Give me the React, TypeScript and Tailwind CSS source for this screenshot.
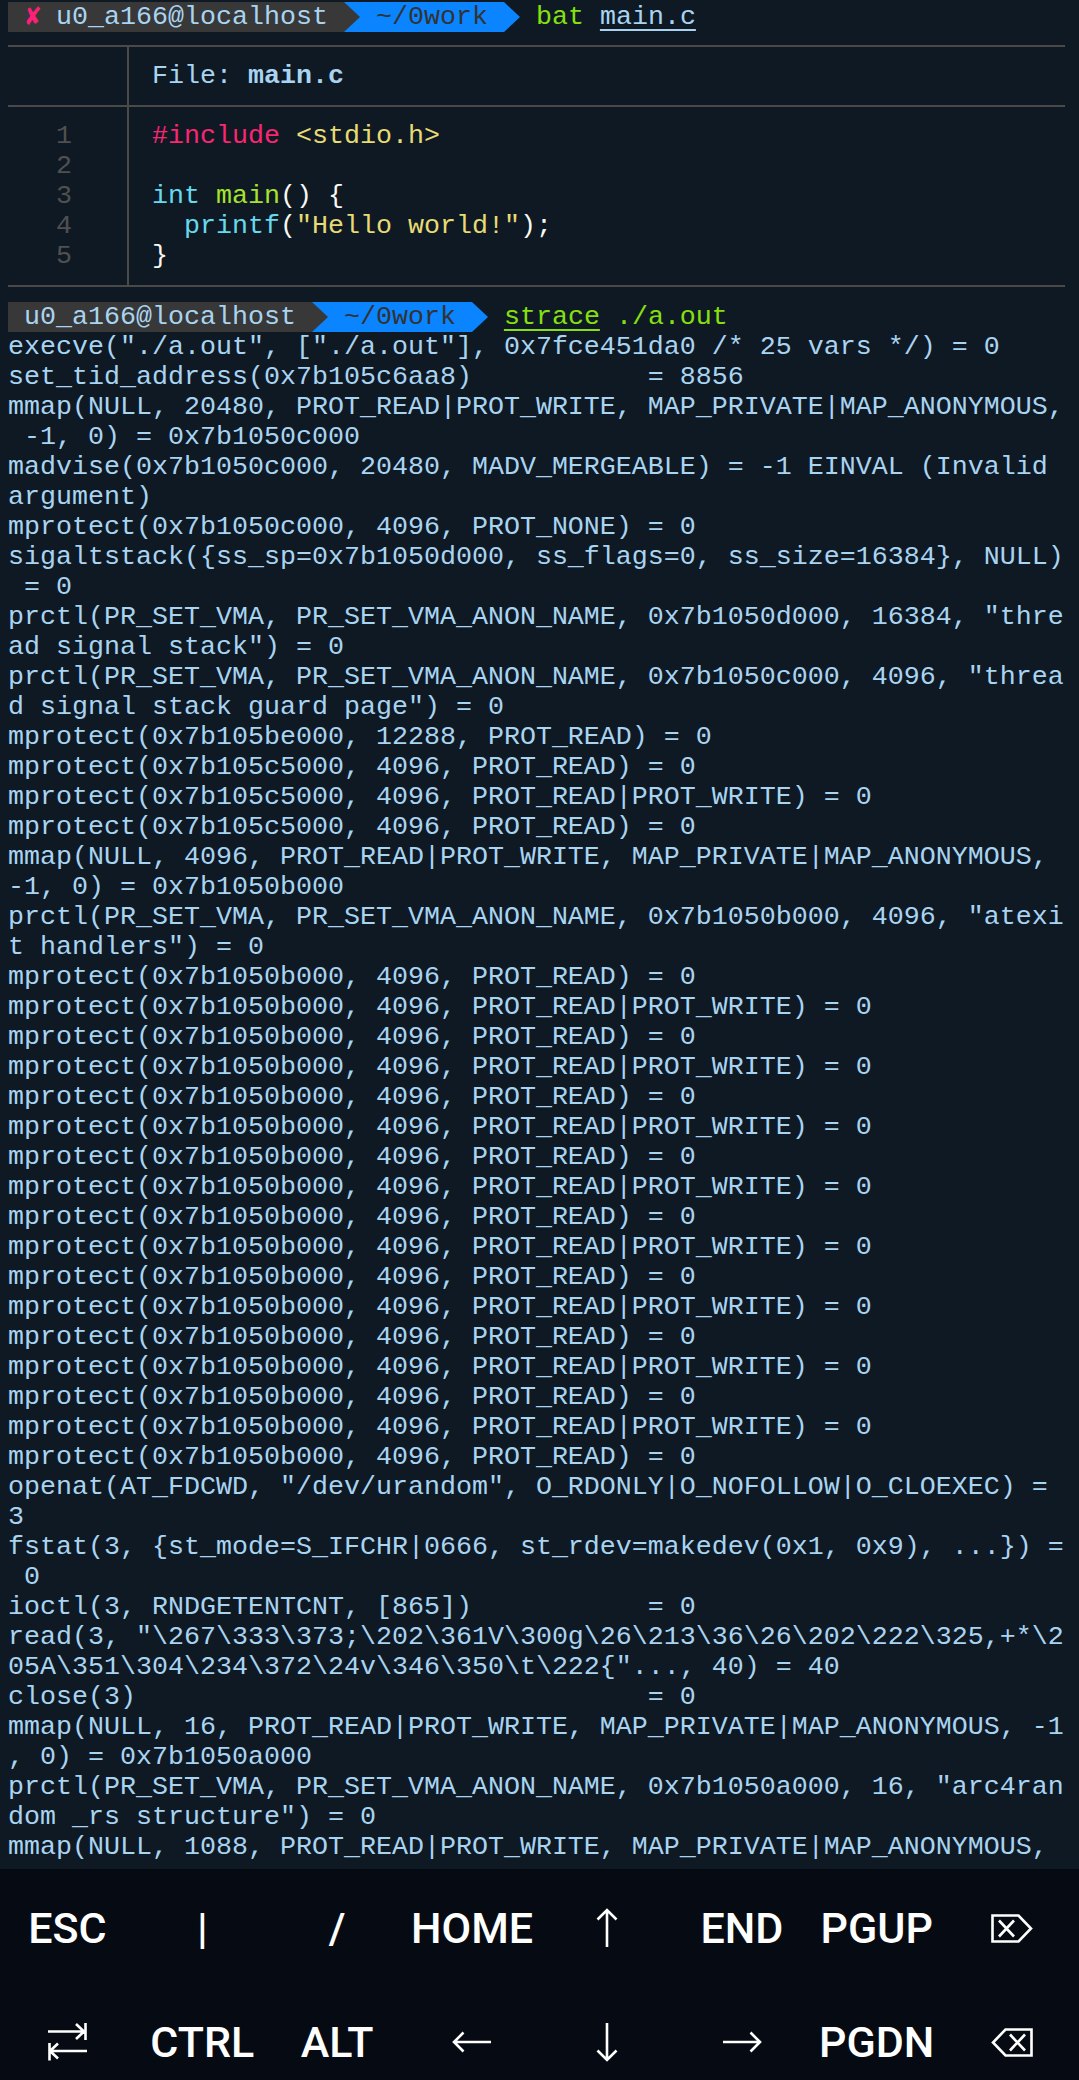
import React from "react";

const LOG: string[] = [
  'execve("./a.out", ["./a.out"], 0x7fce451da0 /* 25 vars */) = 0',
  "set_tid_address(0x7b105c6aa8)           = 8856",
  "mmap(NULL, 20480, PROT_READ|PROT_WRITE, MAP_PRIVATE|MAP_ANONYMOUS,",
  " -1, 0) = 0x7b1050c000",
  "madvise(0x7b1050c000, 20480, MADV_MERGEABLE) = -1 EINVAL (Invalid",
  "argument)",
  "mprotect(0x7b1050c000, 4096, PROT_NONE) = 0",
  "sigaltstack({ss_sp=0x7b1050d000, ss_flags=0, ss_size=16384}, NULL)",
  " = 0",
  'prctl(PR_SET_VMA, PR_SET_VMA_ANON_NAME, 0x7b1050d000, 16384, "thre',
  'ad signal stack") = 0',
  'prctl(PR_SET_VMA, PR_SET_VMA_ANON_NAME, 0x7b1050c000, 4096, "threa',
  'd signal stack guard page") = 0',
  "mprotect(0x7b105be000, 12288, PROT_READ) = 0",
  "mprotect(0x7b105c5000, 4096, PROT_READ) = 0",
  "mprotect(0x7b105c5000, 4096, PROT_READ|PROT_WRITE) = 0",
  "mprotect(0x7b105c5000, 4096, PROT_READ) = 0",
  "mmap(NULL, 4096, PROT_READ|PROT_WRITE, MAP_PRIVATE|MAP_ANONYMOUS,",
  "-1, 0) = 0x7b1050b000",
  'prctl(PR_SET_VMA, PR_SET_VMA_ANON_NAME, 0x7b1050b000, 4096, "atexi',
  't handlers") = 0',
  ...Array.from({ length: 17 }, (_, i) =>
    i % 2 === 0
      ? "mprotect(0x7b1050b000, 4096, PROT_READ) = 0"
      : "mprotect(0x7b1050b000, 4096, PROT_READ|PROT_WRITE) = 0"
  ),
  'openat(AT_FDCWD, "/dev/urandom", O_RDONLY|O_NOFOLLOW|O_CLOEXEC) =',
  "3",
  "fstat(3, {st_mode=S_IFCHR|0666, st_rdev=makedev(0x1, 0x9), ...}) =",
  " 0",
  "ioctl(3, RNDGETENTCNT, [865])           = 0",
  'read(3, "\\267\\333\\373;\\202\\361V\\300g\\26\\213\\36\\26\\202\\222\\325,+*\\2',
  '05A\\351\\304\\234\\372\\24v\\346\\350\\t\\222{"..., 40) = 40',
  "close(3)                                = 0",
  "mmap(NULL, 16, PROT_READ|PROT_WRITE, MAP_PRIVATE|MAP_ANONYMOUS, -1",
  ", 0) = 0x7b1050a000",
  'prctl(PR_SET_VMA, PR_SET_VMA_ANON_NAME, 0x7b1050a000, 16, "arc4ran',
  'dom _rs structure") = 0',
  "mmap(NULL, 1088, PROT_READ|PROT_WRITE, MAP_PRIVATE|MAP_ANONYMOUS,",
];

function Arrow({ fill, bg }: { fill: string; bg: string }) {
  return (
    <span className={`inline-block h-[30px] w-[16px] ${bg}`}>
      <svg width="16" height="30" viewBox="0 0 16 30">
        <polygon points="0,0 16,15 0,30" fill={fill} />
      </svg>
    </span>
  );
}

function Prompt({ failed, children }: { failed?: boolean; children: React.ReactNode }) {
  return (
    <div className="flex h-[30px] whitespace-pre">
      <span className="bg-[#383838]">
        {failed ? (
          <>
            {" "}
            <span className="inline-block w-[16px] scale-y-[1.2] text-center font-['DejaVu_Sans',sans-serif] text-[21px] text-[#ff1f78]">
              ✘
            </span>
            {" u0_a166@localhost "}
          </>
        ) : (
          " u0_a166@localhost "
        )}
      </span>
      <Arrow fill="#383838" bg="bg-[#0a84ff]" />
      <span className="bg-[#0a84ff] text-[#333333]">{" ~/0work "}</span>
      <Arrow fill="#0a84ff" bg="bg-transparent" />
      <span>{" "}</span>
      {children}
    </div>
  );
}

function BatFile() {
  const code: React.ReactNode[] = [
    <>
      <span className="text-[#f92672]">#include</span> <span className="text-[#e6db74]">&lt;stdio.h&gt;</span>
    </>,
    <>{" "}</>,
    <>
      <span className="text-[#66d9ef]">int</span> <span className="text-[#a6e22e]">main</span>
      <span className="text-[#f8f8f2]">() {"{"}</span>
    </>,
    <>
      {"  "}
      <span className="text-[#66d9ef]">printf</span>
      <span className="text-[#f8f8f2]">(</span>
      <span className="text-[#e6db74]">"Hello world!"</span>
      <span className="text-[#f8f8f2]">);</span>
    </>,
    <span className="text-[#f8f8f2]">{"}"}</span>,
  ];
  return (
    <div className="w-[1057px] pt-[13px] pb-[15px]">
      <div className="h-[2px] bg-[#4a4a4a]" />
      <div className="flex">
        <div className="w-[119px]" />
        <div className="w-[2px] bg-[#4a4a4a]" />
        <div className="py-[14px] pl-[23px]">
          <div className="h-[30px] whitespace-pre">
            File: <span className="font-bold">main.c</span>
          </div>
        </div>
      </div>
      <div className="h-[2px] bg-[#4a4a4a]" />
      <div className="flex">
        <div className="w-[119px] py-[14px] text-[#505050]">
          {[1, 2, 3, 4, 5].map((n) => (
            <div key={n} className="h-[30px] whitespace-pre">{`   ${n}`}</div>
          ))}
        </div>
        <div className="w-[2px] bg-[#4a4a4a]" />
        <div className="py-[14px] pl-[23px]">
          {code.map((c, i) => (
            <div key={i} className="h-[30px] whitespace-pre">
              {c}
            </div>
          ))}
        </div>
      </div>
      <div className="h-[2px] bg-[#4a4a4a]" />
    </div>
  );
}

const stroke = { stroke: "white", strokeWidth: 2.6, fill: "none", strokeLinecap: "butt" as const, strokeLinejoin: "miter" as const };

function UpIcon() {
  return (
    <svg width="22" height="40" viewBox="0 0 22 40">
      <path d="M11 2V39M1.5 11.5L11 2L20.5 11.5" {...stroke} />
    </svg>
  );
}
function DownIcon() {
  return (
    <svg width="22" height="40" viewBox="0 0 22 40">
      <path d="M11 1V38M1.5 28.5L11 38L20.5 28.5" {...stroke} />
    </svg>
  );
}
function LeftIcon() {
  return (
    <svg width="40" height="22" viewBox="0 0 40 22">
      <path d="M2 11H39M11.5 1.5L2 11L11.5 20.5" {...stroke} />
    </svg>
  );
}
function RightIcon() {
  return (
    <svg width="40" height="22" viewBox="0 0 40 22">
      <path d="M1 11H38M28.5 1.5L38 11L28.5 20.5" {...stroke} />
    </svg>
  );
}
function TabIcon() {
  return (
    <svg width="41" height="40" viewBox="0 0 41 40">
      <path d="M1 9.5H38M38.5 1V18M29 2L37 9.5L29 17" {...stroke} />
      <path d="M3 29H40M2.5 21V38.5M11 21.5L3 29L11 36.5" {...stroke} />
    </svg>
  );
}
function DelIcon() {
  return (
    <svg width="42" height="29" viewBox="0 0 42 29">
      <path d="M1.5 1.5H27.5L40 14.5L27.5 27.5H1.5Z" {...stroke} />
      <path d="M8 6.5L23 22.5M23 6.5L8 22.5" {...stroke} />
    </svg>
  );
}
function BkspIcon() {
  return (
    <svg width="42" height="29" viewBox="0 0 42 29">
      <path d="M40.5 1.5H14.5L2 14.5L14.5 27.5H40.5Z" {...stroke} />
      <path d="M19 6.5L34 22.5M34 6.5L19 22.5" {...stroke} />
    </svg>
  );
}

const KEYS: React.ReactNode[][] = [
  ["ESC", "|", "/", "HOME", <UpIcon />, "END", "PGUP", <DelIcon />],
  [<TabIcon />, "CTRL", "ALT", <LeftIcon />, <DownIcon />, <RightIcon />, "PGDN", <BkspIcon />],
];

function ExtraKeys() {
  return (
    <div className="bg-[#060b13] pt-[2px] font-['Roboto',sans-serif] text-[43px] font-medium text-white">
      {KEYS.map((row, r) => (
        <div key={r} className="grid h-[114px] grid-cols-8">
          {row.map((k, i) => (
            <div key={i} className="flex items-center justify-center leading-none">
              {k}
            </div>
          ))}
        </div>
      ))}
    </div>
  );
}

export default function App() {
  return (
    <div className="h-[2080px] w-[1079px] overflow-hidden bg-[#0f1924]">
      <div className="h-[1869px] overflow-hidden pt-[2px] pl-[8px] font-['Liberation_Mono',monospace] text-[26.66px] leading-[30px] text-[#a9d4f1]">
        <Prompt failed>
          <span className="text-[#86e010]">bat</span>
          <span>{" "}</span>
          <span className="underline decoration-2 underline-offset-[5px]">main.c</span>
        </Prompt>
        <BatFile />
        <Prompt>
          <span className="text-[#86e010] underline decoration-2 underline-offset-[5px]">strace</span>
          <span className="text-[#86e010]">{" ./a.out"}</span>
        </Prompt>
        {LOG.map((line, i) => (
          <div key={i} className="h-[30px] whitespace-pre">
            {line}
          </div>
        ))}
      </div>
      <ExtraKeys />
    </div>
  );
}
